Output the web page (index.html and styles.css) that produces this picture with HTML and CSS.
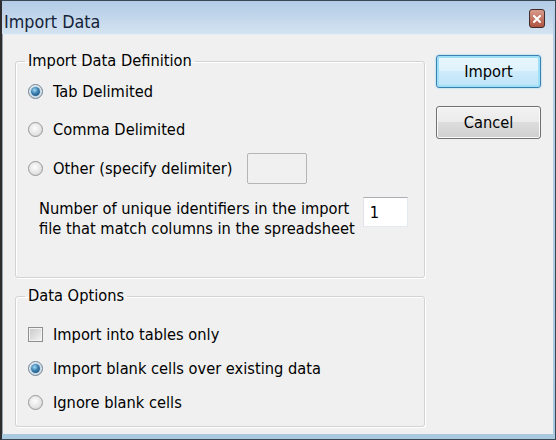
FILE: index.html
```html
<!DOCTYPE html>
<html lang="en">
<head>
   <meta charset="UTF-8">
   <meta name="viewport" content="width=device-width, initial-scale=1.0">
   <title>Import Data</title>
   <link rel="stylesheet" href="styles.css">
</head>
<body>

<div class="window">
   <div class="titlebar">
       <span class="title">Import Data</span>
       <span class="close">
           <svg width="8" height="8" viewBox="0 0 8 8">
               <path d="M1 1 L7 7 M7 1 L1 7" stroke="#fff" stroke-width="2" stroke-linecap="square"/>
           </svg>
       </span>
   </div>

   <div class="client">
       <div class="groups">
           <!-- Import Data Definition -->
           <fieldset class="group group-definition">
               <legend>Import Data Definition</legend>
               <div class="options">
                   <label class="option"><span class="radio checked"></span>Tab Delimited</label>
                   <label class="option"><span class="radio"></span>Comma Delimited</label>
                   <label class="option"><span class="radio"></span>Other (specify delimiter)<span class="delim-box"></span></label>
               </div>
               <div class="identifiers">
                   <span class="identifiers-text">Number of unique identifiers in the import<br>file that match columns in the spreadsheet</span>
                   <input class="textbox" type="text" value="1">
               </div>
           </fieldset>

           <!-- Data Options -->
           <fieldset class="group group-options">
               <legend>Data Options</legend>
               <label class="option option-small"><span class="checkbox"></span>Import into tables only</label>
               <label class="option option-small"><span class="radio checked"></span>Import blank cells over existing data</label>
               <label class="option option-small"><span class="radio"></span>Ignore blank cells</label>
           </fieldset>
       </div>

       <div class="buttons">
           <button class="btn btn-default">Import</button>
           <button class="btn">Cancel</button>
       </div>
   </div>
</div>

</body>
</html>
```

FILE: styles.css
```css
body {
    margin: 0;
    padding: 0;
    font-family: "DejaVu Sans Condensed", "DejaVu Sans", sans-serif;
    font-stretch: condensed;
    font-size: 16.3px;
    color: #000;
}
.window {
    width: 556px;
    height: 440px;
    box-sizing: border-box;
    display: flex;
    flex-direction: column;
    border: 1px solid #3a4856;
    border-left: 2px solid #2d2d2d;
    padding: 0 2px 5px 0;
    background: linear-gradient(#b7cfe6, #a9c9de);
}
.titlebar {
    height: 33px;
    display: flex;
    align-items: flex-start;
    justify-content: space-between;
    background: linear-gradient(#b2cbe5, #d4e3f1);
}
.title {
    font-size: 17.8px;
    line-height: 20px;
    margin: 11px 0 0 2px;
    color: #15233a;
}
.close {
    width: 16px;
    height: 19px;
    box-sizing: border-box;
    margin: 8px 8px 0 0;
    border: 1px solid #3f2b29;
    border-radius: 3px;
    background: linear-gradient(#d99a8b, #ae5441);
    display: flex;
    align-items: center;
    justify-content: center;
}
.client {
    flex: 1;
    display: flex;
    gap: 11px;
    padding: 17px 12px 0 13px;
    background-color: #f0f0f0;
    box-shadow: inset 1px 0 0 #97a1ab, inset 0 1px 0 #e6eef6;
}
.group {
    width: 410px;
    box-sizing: border-box;
    margin: 0;
    padding: 0;
    border: 1px solid #d3d3d3;
    border-radius: 3px;
    box-shadow: inset 1px 1px 0 #fff, 1px 1px 0 #fff;
}
.group legend {
    margin-left: 9px;
    padding: 0 3px;
    line-height: 20px;
}
.group-definition {
    padding-bottom: 38px;
}
.group-options {
    margin-top: 8px;
    padding-top: 11px;
    padding-bottom: 7px;
}
.options {
    padding-top: 1px;
}
.option {
    display: flex;
    align-items: center;
    height: 38.5px;
    padding-left: 12px;
    gap: 10px;
}
.option-small {
    height: 34px;
}
.radio {
    width: 15px;
    height: 15px;
    box-sizing: border-box;
    border-radius: 50%;
    border: 1px solid #979797;
    background: radial-gradient(circle at 45% 40%, #fdfdfd 0%, #e6e6e6 55%, #c9c9c9 100%);
    display: flex;
    align-items: center;
    justify-content: center;
}
.radio.checked {
    border-color: #6a8297;
}
.radio.checked::after {
    content: "";
    width: 9px;
    height: 9px;
    border-radius: 50%;
    background: radial-gradient(circle at 40% 35%, #9fdcf7 0%, #3a7cae 45%, #123f63 100%);
    box-shadow: 0 0 0 1px #b9d9ec;
}
.checkbox {
    width: 15px;
    height: 15px;
    box-sizing: border-box;
    border: 1px solid #8e8f8f;
    box-shadow: inset 0 0 0 1px #f4f4f4;
    background: linear-gradient(135deg, #c8c8c8, #f4f4f4);
}
.delim-box {
    width: 60px;
    height: 31px;
    box-sizing: border-box;
    margin-left: 4px;
    border: 1px solid #b5b5b5;
    border-radius: 2px;
    background-color: #f0f0f0;
}
.identifiers {
    display: flex;
    align-items: flex-start;
    margin-top: 11.5px;
    padding-left: 23px;
    line-height: 20px;
}
.textbox {
    width: 45px;
    height: 30px;
    box-sizing: border-box;
    margin: -2px 0 0 8px;
    padding: 0 0 0 6px;
    border: 1px solid;
    border-color: #abadb3 #e3e9ef #e3e9ef #e2e3ea;
    background-color: #fff;
    font-family: inherit;
    font-stretch: inherit;
    font-size: 16.3px;
    color: #000;
}
.buttons {
    width: 105px;
    margin-top: 4px;
    display: flex;
    flex-direction: column;
    gap: 18px;
}
.btn {
    height: 33px;
    padding: 0;
    border: 1px solid #707070;
    border-radius: 3px;
    font-family: inherit;
    font-stretch: inherit;
    font-size: 16.3px;
    color: #000;
    background: linear-gradient(#f2f2f2 0%, #ebebeb 50%, #dddddd 50%, #cfcfcf 100%);
    box-shadow: inset 0 0 0 1px #fbfbfb;
}
.btn-default {
    border-color: #3c7fb1;
    background: linear-gradient(#e9f6fd 0%, #def2fc 50%, #cdebfb 50%, #bfe4f8 100%);
    box-shadow: inset 0 0 0 2px #9ee0f7, 0 0 2px #7ccdef;
}
```
